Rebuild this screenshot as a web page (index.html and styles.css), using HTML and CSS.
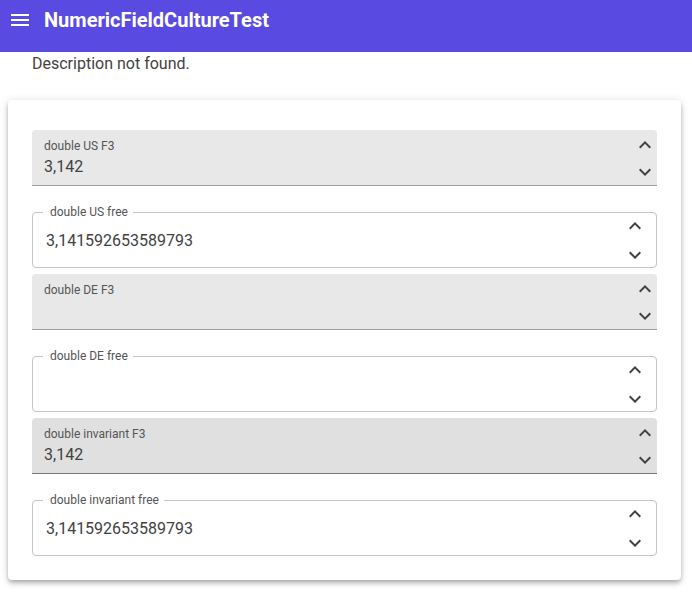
FILE: index.html
```html
<!DOCTYPE html>
<html>
<head>
<meta charset="utf-8">
<link rel="stylesheet" href="styles.css">
</head>
<body>
<header class="appbar">
  <svg class="menu-icon" viewBox="0 0 24 24" width="24" height="24"><path fill="#fff" d="M3 18h18v-2H3v2zm0-5h18v-2H3v2zm0-7v2h18V6H3z"/></svg>
  <span class="title">NumericFieldCultureTest</span>
</header>
<main class="content">
  <p class="desc">Description not found.</p>
  <section class="card">
    <div class="field filled">
      <div class="body"><span class="label">double US F3</span><span class="value">3,142</span></div>
      <div class="spin"><svg viewBox="0 0 24 24"><path d="M7.41 15.41L12 10.83l4.59 4.58L18 14l-6-6-6 6z"/></svg><svg viewBox="0 0 24 24"><path d="M7.41 8.59L12 13.17l4.59-4.58L18 10l-6 6-6-6 1.41-1.41z"/></svg></div>
    </div>
    <fieldset class="field outlined">
      <legend>double US free</legend>
      <div class="body"><span class="value">3,141592653589793</span></div>
      <div class="spin"><svg viewBox="0 0 24 24"><path d="M7.41 15.41L12 10.83l4.59 4.58L18 14l-6-6-6 6z"/></svg><svg viewBox="0 0 24 24"><path d="M7.41 8.59L12 13.17l4.59-4.58L18 10l-6 6-6-6 1.41-1.41z"/></svg></div>
    </fieldset>
    <div class="field filled">
      <div class="body"><span class="label">double DE F3</span><span class="value"></span></div>
      <div class="spin"><svg viewBox="0 0 24 24"><path d="M7.41 15.41L12 10.83l4.59 4.58L18 14l-6-6-6 6z"/></svg><svg viewBox="0 0 24 24"><path d="M7.41 8.59L12 13.17l4.59-4.58L18 10l-6 6-6-6 1.41-1.41z"/></svg></div>
    </div>
    <fieldset class="field outlined">
      <legend>double DE free</legend>
      <div class="body"><span class="value"></span></div>
      <div class="spin"><svg viewBox="0 0 24 24"><path d="M7.41 15.41L12 10.83l4.59 4.58L18 14l-6-6-6 6z"/></svg><svg viewBox="0 0 24 24"><path d="M7.41 8.59L12 13.17l4.59-4.58L18 10l-6 6-6-6 1.41-1.41z"/></svg></div>
    </fieldset>
    <div class="field filled hover">
      <div class="body"><span class="label">double invariant F3</span><span class="value">3,142</span></div>
      <div class="spin"><svg viewBox="0 0 24 24"><path d="M7.41 15.41L12 10.83l4.59 4.58L18 14l-6-6-6 6z"/></svg><svg viewBox="0 0 24 24"><path d="M7.41 8.59L12 13.17l4.59-4.58L18 10l-6 6-6-6 1.41-1.41z"/></svg></div>
    </div>
    <fieldset class="field outlined">
      <legend>double invariant free</legend>
      <div class="body"><span class="value">3,141592653589793</span></div>
      <div class="spin"><svg viewBox="0 0 24 24"><path d="M7.41 15.41L12 10.83l4.59 4.58L18 14l-6-6-6 6z"/></svg><svg viewBox="0 0 24 24"><path d="M7.41 8.59L12 13.17l4.59-4.58L18 10l-6 6-6-6 1.41-1.41z"/></svg></div>
    </fieldset>
  </section>
</main>
</body>
</html>
```
FILE: styles.css
```css
* { box-sizing: border-box; }
html, body { margin: 0; padding: 0; background: #fff; }
body { font-family: Roboto, "Liberation Sans", sans-serif; color: #424242; }

.appbar {
  height: 52px;
  background: #594ae2;
  display: flex;
  align-items: flex-start;
  padding: 8px 0 0 8px;
}
.menu-icon { display: block; flex: none; }
.title {
  margin-left: 12px;
  color: #fff;
  font-size: 20px;
  font-weight: 700;
  line-height: 24px;
}

.content { padding: 0 11px 14px 8px; }
.desc {
  margin: 0 0 24px 24px;
  font-size: 16px;
  line-height: 24px;
  color: #424242;
}

.card {
  background: #fff;
  border-radius: 4px;
  padding: 30px 24px 24px;
  box-shadow: 0 2px 4px -1px rgba(0,0,0,.2), 0 4px 5px 0 rgba(0,0,0,.14), 0 1px 10px 0 rgba(0,0,0,.12);
  display: flex;
  flex-direction: column;
}

.field {
  height: 56px;
  display: flex;
  margin: 0;
  min-width: 0;
}
.filled {
  background: #e8e8e8;
  border-radius: 4px 4px 0 0;
  border-bottom: 1px solid #9e9e9e;
  padding: 0 0 0 12px;
}
.filled.hover { background: #e0e0e0; border-bottom-color: #7a7a7a; }
.filled + .outlined { margin-top: 26px; }
.outlined + .filled { margin-top: 6px; }

.body { flex: 1; display: flex; flex-direction: column; min-width: 0; }
.filled .label {
  font-size: 12px;
  line-height: 14px;
  margin-top: 9px;
  color: #555;
}
.filled .value {
  font-size: 16px;
  line-height: 20px;
  margin-top: 4px;
  color: #424242;
}

.outlined {
  position: relative;
  border: 1px solid #c4c4c4;
  border-radius: 4px;
  padding: 0 0 0 13px;
  height: 56px;
}
.outlined legend {
  position: absolute;
  top: -8px;
  left: 10px;
  padding: 0 5px 0 7px;
  background: #fff;
  font-size: 12px;
  line-height: 14px;
  color: #555;
}
.outlined .value {
  font-size: 16px;
  line-height: 20px;
  margin-top: 18px;
  color: #424242;
}

.spin {
  width: 24px;
  flex: none;
  display: flex;
  flex-direction: column;
  padding-top: 3px;
}
.spin svg { width: 24px; height: 24px; fill: #424242; display: block; }
.spin svg + svg { margin-top: 3px; }
.outlined .spin { margin-right: 9px; padding-top: 1px; }
.outlined .spin svg + svg { margin-top: 5px; }
```
